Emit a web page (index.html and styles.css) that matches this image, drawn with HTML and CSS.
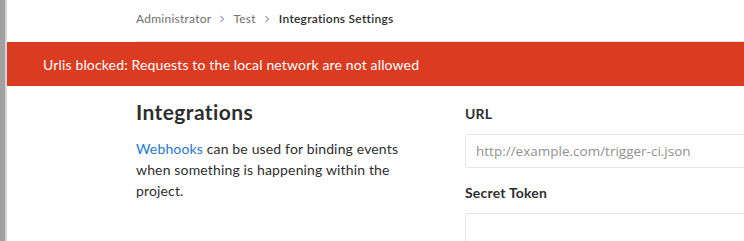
FILE: index.html
```html
<!DOCTYPE html>
<html lang="en">
<head>
    <meta charset="UTF-8">
    <title>Integrations Settings</title>
    <link rel="stylesheet" href="styles.css">
</head>
<body>
    <div class="layout">
        <div class="sidebar-edge"></div>
        <div class="content-wrapper">
            <!-- breadcrumbs -->
            <div class="breadcrumbs">
                <a href="#" class="crumb">Administrator</a>
                <svg class="chevron" width="6" height="8" viewBox="0 0 6 8"><path d="M1.5 1 L4.5 4 L1.5 7" fill="none" stroke="#a0a0a0" stroke-width="1.1"/></svg>
                <a href="#" class="crumb">Test</a>
                <svg class="chevron" width="6" height="8" viewBox="0 0 6 8"><path d="M1.5 1 L4.5 4 L1.5 7" fill="none" stroke="#a0a0a0" stroke-width="1.1"/></svg>
                <span class="crumb current">Integrations Settings</span>
            </div>

            <!-- flash -->
            <div class="flash-alert">Urlis blocked: Requests to the local network are not allowed</div>

            <div class="settings-row">
                <div class="settings-info">
                    <h4>Integrations</h4>
                    <p><a href="#">Webhooks</a> can be used for binding events when something is happening within the project.</p>
                </div>
                <form class="settings-form">
                    <div class="form-group">
                        <label for="hook_url">URL</label>
                        <input type="text" id="hook_url" placeholder="http://example.com/trigger-ci.json">
                    </div>
                    <div class="form-group">
                        <label for="hook_token">Secret Token</label>
                        <input type="text" id="hook_token">
                    </div>
                </form>
            </div>
        </div>
    </div>
</body>
</html>
```

FILE: styles.css
```css
html, body {
    margin: 0;
    height: 100%;
    overflow: hidden;
}
body {
    font-family: Lato, "Open Sans", sans-serif;
    color: #2e2e2e;
    background: #fff;
}
.layout {
    display: flex;
    height: 100%;
}
.sidebar-edge {
    width: 2px;
    border-left: 5px solid #a0a0a0;
    background: #d6d6d6;
    flex-shrink: 0;
}
.content-wrapper {
    flex: 1;
    min-width: 0;
}
.breadcrumbs {
    height: 42px;
    box-sizing: border-box;
    margin-left: 129px;
    padding-bottom: 5px;
    border-bottom: 1px solid #e5e5e5;
    display: flex;
    align-items: center;
    gap: 8px;
    font-size: 12px;
    letter-spacing: 0.25px;
}
.crumb {
    color: #707070;
    text-decoration: none;
}
.crumb.current {
    color: #2e2e2e;
    font-weight: 600;
    margin-left: 1px;
}
.chevron {
    margin-top: 1px;
}
.flash-alert {
    background: #db3b21;
    color: #fff;
    height: 44px;
    padding-left: 36px;
    display: flex;
    align-items: center;
    font-size: 14px;
    letter-spacing: 0.15px;
}
.settings-row {
    display: flex;
    padding-left: 129px;
    padding-top: 13px;
}
.settings-info {
    width: 329px;
    flex-shrink: 0;
}
.settings-info h4 {
    font-size: 21px;
    font-weight: 700;
    letter-spacing: 0.4px;
    margin: 0 0 13px;
    line-height: 26px;
}
.settings-info p {
    font-size: 14px;
    letter-spacing: 0.15px;
    line-height: 21px;
    margin: 0;
    width: 272px;
}
.settings-info a {
    color: #1f78d1;
    text-decoration: none;
}
.settings-form {
    width: 420px;
    flex-shrink: 0;
    padding-top: 6px;
}
.form-group {
    margin-bottom: 16px;
}
.form-group label {
    display: block;
    font-size: 14px;
    font-weight: 700;
    letter-spacing: 0.2px;
    margin-bottom: 12px;
}
.form-group input {
    width: 100%;
    height: 34px;
    box-sizing: border-box;
    border: 1px solid #e5e5e5;
    border-radius: 3px;
    padding: 0 10px;
    font-family: "Open Sans", sans-serif;
    font-size: 13.5px;
    color: #2e2e2e;
}
.form-group input::placeholder {
    color: #919191;
}
```
